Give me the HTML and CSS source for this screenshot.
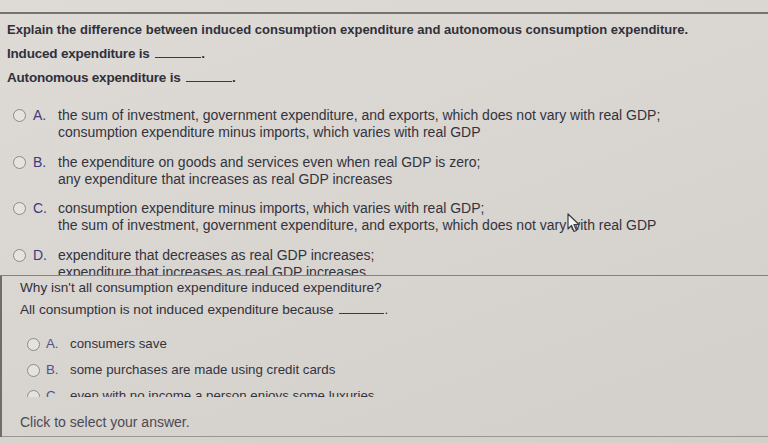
FILE: index.html
```html
<!DOCTYPE html>
<html>
<head>
<meta charset="utf-8">
<link rel="stylesheet" href="styles.css">
</head>
<body>
<div class="screen">
  <section class="upper">
    <div class="rule"></div>
    <div class="prompt">
      <p class="title">Explain the difference between induced consumption expenditure and autonomous consumption expenditure.</p>
      <p class="fill">Induced expenditure is <span class="blank"></span>.</p>
      <p class="fill">Autonomous expenditure is <span class="blank"></span>.</p>
    </div>
    <ul class="options">
      <li class="option"><span class="radio"></span><span class="letter">A.</span><span class="text">the sum of investment, government expenditure, and exports, which does not vary with real GDP;<br>consumption expenditure minus imports, which varies with real GDP</span></li>
      <li class="option"><span class="radio"></span><span class="letter">B.</span><span class="text">the expenditure on goods and services even when real GDP is zero;<br>any expenditure that increases as real GDP increases</span></li>
      <li class="option"><span class="radio"></span><span class="letter">C.</span><span class="text">consumption expenditure minus imports, which varies with real GDP;<br>the sum of investment, government expenditure, and exports, which does not vary with real GDP</span></li>
      <li class="option"><span class="radio"></span><span class="letter">D.</span><span class="text">expenditure that decreases as real GDP increases;<br>expenditure that increases as real GDP increases</span></li>
    </ul>
  </section>
  <section class="lower">
    <div class="pane">
      <p class="q">Why isn't all consumption expenditure induced expenditure?</p>
      <p class="q">All consumption is not induced expenditure because <span class="blank wide"></span>.</p>
      <ul class="choices">
        <li class="choice"><span class="radio"></span><span class="letter">A.</span><span class="text">consumers save</span></li>
        <li class="choice"><span class="radio"></span><span class="letter">B.</span><span class="text">some purchases are made using credit cards</span></li>
        <li class="choice"><span class="radio"></span><span class="letter">C.</span><span class="text">even with no income a person enjoys some luxuries</span></li>
      </ul>
    </div>
    <p class="hint">Click to select your answer.</p>
  </section>
  <svg class="cursor" width="14" height="20" viewBox="0 0 14 20"><path d="M1 1 L1 16 L4.5 12.5 L7 18.5 L9.5 17.5 L7 11.5 L12 11.5 Z" fill="#f4f2ee" stroke="#3a3a44" stroke-width="1.2" stroke-linejoin="round"/></svg>
</div>
</body>
</html>
```

FILE: styles.css
```css
* { box-sizing: border-box; }
html, body { margin: 0; padding: 0; }
body {
  width: 768px;
  height: 443px;
  overflow: hidden;
  background: linear-gradient(160deg, #dedad5 0%, #d8d4cf 55%, #d3cfca 100%);
  font-family: "Liberation Sans", Arial, sans-serif;
  color: #34343f;
}
.screen { position: relative; width: 768px; height: 443px; }
p { margin: 0; }
ul { list-style: none; margin: 0; padding: 0; }

.upper {
  height: 276px;
  overflow: hidden;
  border-bottom: 1px solid #85827e;
}
.rule {
  margin-top: 12px;
  height: 2px;
  background: #75726f;
}
.prompt { padding: 4px 0 0 7px; }
.title { font-size: 13px; font-weight: bold; line-height: 24px; color: #30303b; }
.fill { font-size: 13.5px; line-height: 24px; letter-spacing: -0.2px; font-weight: bold; color: #30303b; }
.blank {
  display: inline-block;
  width: 46px;
  border-bottom: 1px solid #3a3a44;
  vertical-align: baseline;
  margin-left: 2px;
}
.blank.wide { width: 45px; }

.options { padding: 17px 0 0 13px; }
.option {
  display: flex;
  align-items: flex-start;
  font-size: 14px;
  line-height: 17px;
  margin-bottom: 12.5px;
}
.radio {
  flex: none;
  width: 13px;
  height: 13px;
  border: 1.5px solid #8b8a8c;
  border-radius: 50%;
  background: #e6e3df;
  margin-top: 2px;
}
.letter {
  flex: none;
  width: 32px;
  padding-left: 7px;
  color: #3d3b7a;
}
.text { color: #33333e; }

.lower {
  border-left: 2px solid #6f6d6b;
}
.pane {
  height: 121px;
  overflow: hidden;
  padding: 1px 0 0 18px;
}
.q { font-size: 13.6px; line-height: 22px; color: #30303b; }
.choices { padding: 15px 0 0 7px; }
.choice {
  display: flex;
  align-items: flex-start;
  font-size: 13.3px;
  line-height: 16px;
  margin-bottom: 10px;
}
.choice .letter { width: 30px; padding-left: 6px; color: #52518c; }
.hint {
  font-size: 14px;
  line-height: 16px;
  padding: 17px 0 0 18px;
  color: #4a4a55;
  height: 40px;
  border-bottom: 1px solid #9a9793;
}

.cursor { position: absolute; left: 567px; top: 213px; }
```
